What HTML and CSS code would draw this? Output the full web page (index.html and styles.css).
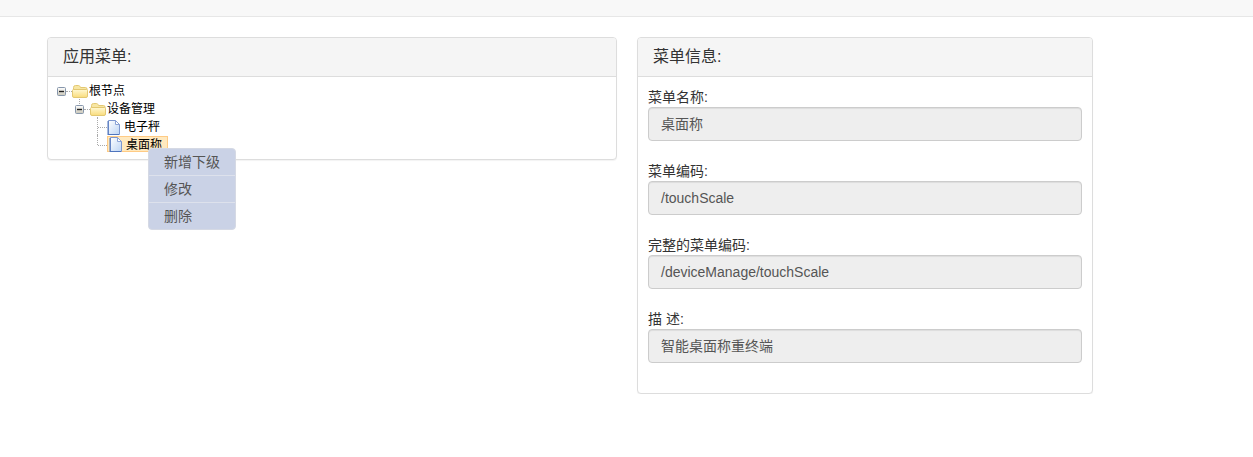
FILE: index.html
```html
<!DOCTYPE html>
<html lang="zh-CN">

<head>
    <meta charset="UTF-8">
    <title>应用菜单</title>
    <link rel="stylesheet" href="styles.css">
</head>

<body>
    <svg class="defs" width="0" height="0">
        <defs>
            <linearGradient id="sw" x1="0" y1="0" x2="0" y2="1">
                <stop offset="0" stop-color="#fff" />
                <stop offset="1" stop-color="#c9c6b8" />
            </linearGradient>
            <linearGradient id="fold" x1="0" y1="0" x2="0" y2="1">
                <stop offset="0" stop-color="#fff8d2" />
                <stop offset="1" stop-color="#f9dc7c" />
            </linearGradient>
            <linearGradient id="doc" x1="0" y1="0" x2="1" y2="1">
                <stop offset="0" stop-color="#fff" />
                <stop offset="1" stop-color="#bcd4f4" />
            </linearGradient>
            <symbol id="switch" viewBox="0 0 9 9">
                <rect x=".5" y=".5" width="8" height="8" rx="1" fill="url(#sw)" stroke="#8696ab" />
                <path d="M2 4.500h5" stroke="#222" stroke-width="1.400" />
            </symbol>
            <symbol id="folder" viewBox="0 0 16 13">
                <path d="M1.500 11V2.500q0-2 2-2h3q1 0 1.500 1l.5 1h5q1.500 0 1.500 1.500v7z" fill="#f7e6a2" stroke="#e3c872" />
                <path d="M.5 11V5.500q0-1 1-1h13q1 0 1 1V11q0 1.500-1.500 1.500H2Q.5 12.500.5 11z" fill="url(#fold)" stroke="#e3c872" />
            </symbol>
            <symbol id="file" viewBox="0 0 13 15">
                <path d="M1.500.500h7l4 4v10h-11z" fill="url(#doc)" stroke="#7d97cf" />
                <path d="M1 1v14M1 14.500h11" stroke="#4f74bd" />
                <path d="M8.500.500v4h4z" fill="#fff" stroke="#8ba3d6" />
            </symbol>
        </defs>
    </svg>

    <div class="topbar"></div>
    <div class="content">
        <div class="panel panel_tree">
            <div class="panel_head">应用菜单:</div>
            <div class="tree_body">
                <div class="node">
                    <svg class="switch" width="9" height="9"><use href="#switch" /></svg>
                    <span class="dots"></span>
                    <svg class="ico" width="16" height="13"><use href="#folder" /></svg>
                    <span class="name">根节点</span>
                </div>
                <div class="node level1">
                    <svg class="switch" width="9" height="9"><use href="#switch" /></svg>
                    <span class="dots"></span>
                    <svg class="ico" width="16" height="13"><use href="#folder" /></svg>
                    <span class="name">设备管理</span>
                </div>
                <div class="node level2">
                    <span class="dots long"></span>
                    <svg class="ico" width="13" height="15"><use href="#file" /></svg>
                    <span class="name">电子秤</span>
                </div>
                <div class="node level2 last">
                    <span class="dots long"></span>
                    <span class="selected">
                        <svg class="ico" width="13" height="15"><use href="#file" /></svg>
                        <span class="name">桌面称</span>
                    </span>
                </div>
            </div>
            <ul class="context_menu">
                <li>新增下级</li>
                <li>修改</li>
                <li>删除</li>
            </ul>
        </div>

        <div class="panel panel_info">
            <div class="panel_head">菜单信息:</div>
            <div class="info_body">
                <div class="field">
                    <label>菜单名称:</label>
                    <div class="input">桌面称</div>
                </div>
                <div class="field">
                    <label>菜单编码:</label>
                    <div class="input">/touchScale</div>
                </div>
                <div class="field">
                    <label>完整的菜单编码:</label>
                    <div class="input">/deviceManage/touchScale</div>
                </div>
                <div class="field">
                    <label>描 述:</label>
                    <div class="input">智能桌面称重终端</div>
                </div>
            </div>
        </div>
    </div>
</body>

</html>
```

FILE: styles.css
```css
* {
    box-sizing: border-box;
}

body {
    margin: 0;
    background-color: #fff;
    color: #333;
    font-family: "Liberation Sans", "Noto Sans CJK SC", sans-serif;
    font-size: 14px;
}

.defs {
    position: absolute;
}

.topbar {
    height: 17px;
    background-color: #f8f8f8;
    border-bottom: 1px solid #e7e7e7;
}

.content {
    display: flex;
    align-items: flex-start;
    gap: 20px;
    padding: 20px 0 0 47px;
}

.panel {
    position: relative;
    background-color: #fff;
    border: 1px solid #ddd;
    border-radius: 4px;
    box-shadow: 0 1px 1px rgba(0, 0, 0, .05);
}

.panel_tree {
    width: 570px;
}

.panel_info {
    width: 456px;
}

.panel_head {
    height: 39px;
    padding: 9px 15px;
    background-color: #f5f5f5;
    border-bottom: 1px solid #ddd;
    border-radius: 3px 3px 0 0;
    font-size: 16px;
    line-height: 20px;
}

/* tree */
.tree_body {
    padding: 4px 0 6px 9px;
    font-size: 12px;
    color: #000;
}

.node {
    position: relative;
    display: flex;
    align-items: center;
    height: 18px;
}

.name {
    margin-bottom: 2px;
}

.level1 {
    padding-left: 18px;
}

.level1::before {
    content: "";
    position: absolute;
    left: 22px;
    top: 0;
    height: 5px;
    border-left: 1px dotted #aaa;
}

.level2 {
    padding-left: 41px;
}

.level2::before {
    content: "";
    position: absolute;
    left: 40px;
    top: 0;
    height: 18px;
    border-left: 1px dotted #aaa;
}

.level2.last::before {
    height: 10px;
}

.switch,
.ico {
    flex: none;
    margin-top: 2px;
}

.ico {
    margin-right: 1px;
}

.dots {
    width: 6px;
    height: 1px;
    margin-top: 2px;
    border-top: 1px dotted #aaa;
}

.dots.long {
    width: 9px;
}

.level2 .ico {
    margin-right: 4px;
}

.selected {
    display: flex;
    align-items: center;
    width: 61px;
    height: 16px;
    padding-left: 1px;
    background-color: #ffe9bf;
    border: 1px solid #ffcb85;
}

.selected .ico {
    margin-top: 0;
}

.context_menu {
    position: absolute;
    top: 110px;
    left: 100px;
    width: 88px;
    margin: 0;
    padding: 0;
    list-style: none;
    background-color: #cad2e6;
    border: 1px solid #d5d9e4;
    border-radius: 4px;
    font-size: 14px;
    color: #555;
}

.context_menu li {
    height: 27px;
    padding-left: 15px;
    line-height: 26px;
    border-bottom: 1px solid #dde1ec;
}

.context_menu li:last-child {
    height: 26px;
    border-bottom: 0;
}

/* form */
.info_body {
    padding: 11px 10px 9px;
}

.field {
    margin-bottom: 21px;
}

.field label {
    display: block;
    height: 19px;
    font-size: 14px;
    line-height: 18px;
    color: #333;
}

.input {
    height: 34px;
    padding: 6px 12px;
    background-color: #eee;
    border: 1px solid #ccc;
    border-radius: 4px;
    box-shadow: inset 0 1px 1px rgba(0, 0, 0, .075);
    font-size: 14px;
    line-height: 20px;
    color: #555;
}
```
